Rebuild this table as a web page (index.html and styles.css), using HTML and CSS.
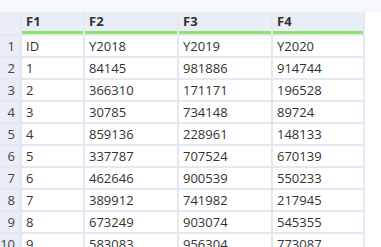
FILE: index.html
```html
<!DOCTYPE html>
<html>
<head>
<meta charset="utf-8">
<link rel="stylesheet" href="styles.css">
</head>
<body>
<div class="topbar"></div>
<div class="sheet">
  <div class="grid">
    <div class="hd corner"></div>
    <div class="hd col">F1</div>
    <div class="hd col">F2</div>
    <div class="hd col">F3</div>
    <div class="hd col">F4</div>

    <div class="rn">1</div><div class="c">ID</div><div class="c">Y2018</div><div class="c">Y2019</div><div class="c">Y2020</div>
    <div class="rn">2</div><div class="c">1</div><div class="c">84145</div><div class="c">981886</div><div class="c">914744</div>
    <div class="rn">3</div><div class="c">2</div><div class="c">366310</div><div class="c">171171</div><div class="c">196528</div>
    <div class="rn">4</div><div class="c">3</div><div class="c">30785</div><div class="c">734148</div><div class="c">89724</div>
    <div class="rn">5</div><div class="c">4</div><div class="c">859136</div><div class="c">228961</div><div class="c">148133</div>
    <div class="rn">6</div><div class="c">5</div><div class="c">337787</div><div class="c">707524</div><div class="c">670139</div>
    <div class="rn">7</div><div class="c">6</div><div class="c">462646</div><div class="c">900539</div><div class="c">550233</div>
    <div class="rn">8</div><div class="c">7</div><div class="c">389912</div><div class="c">741982</div><div class="c">217945</div>
    <div class="rn">9</div><div class="c">8</div><div class="c">673249</div><div class="c">903074</div><div class="c">545355</div>
    <div class="rn">10</div><div class="c">9</div><div class="c">583083</div><div class="c">956304</div><div class="c">773087</div>
  </div>
</div>
</body>
</html>
```
FILE: styles.css
```css
html, body {
  margin: 0;
  padding: 0;
  background: #ffffff;
  overflow: hidden;
  height: 247px;
}
body {
  font-family: "Open Sans", "Noto Sans", sans-serif;
  font-size: 13px;
  color: #333333;
}
.topbar {
  height: 12px;
  background: #f6f8fc;
}
.sheet {
  display: flex;
}
.grid {
  display: grid;
  grid-template-columns: 20px 61px 92px 92px 90px;
  grid-auto-rows: 20px;
  grid-template-rows: 22px;
  gap: 2px;
  background: #e4e8f2;
  padding: 0 2px 2px 0;
}
.hd {
  background: #e9edf6;
}
.col {
  font-weight: 700;
  color: #333;
  padding-left: 4px;
  line-height: 19px;
  border-bottom: 3px solid #90e36e;
}
.corner {
  border-bottom: 3px solid #e9edf6;
}
.rn {
  background: #e9edf6;
  text-align: right;
  padding-right: 5px;
  line-height: 20px;
  color: #444;
}
.c {
  background: #ffffff;
  padding-left: 4px;
  line-height: 20px;
  white-space: nowrap;
  overflow: hidden;
}
```
